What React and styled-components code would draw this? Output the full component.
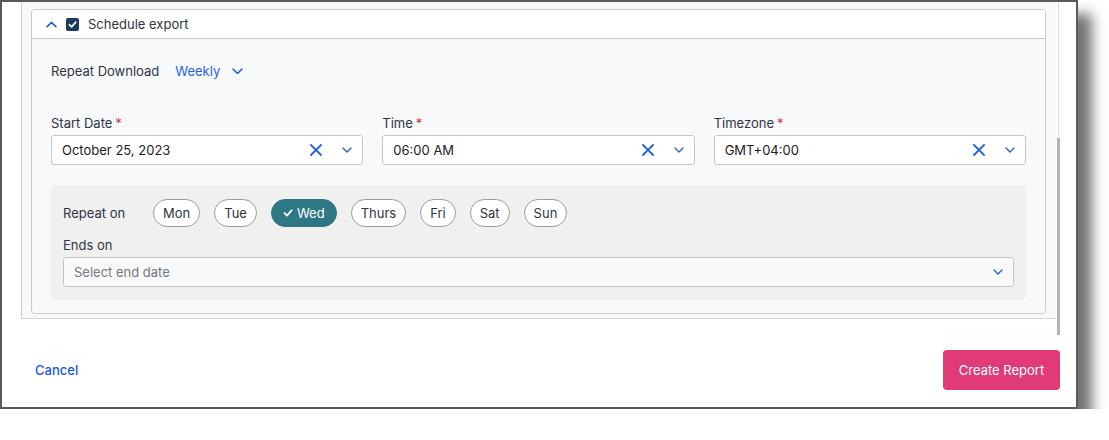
import React from 'react';
import styled, { createGlobalStyle } from 'styled-components';

const Global = createGlobalStyle`
  html, body {
    margin: 0;
    padding: 0;
    background: #fff;
    font-family: Inter, "Open Sans", sans-serif;
  }
  * { box-sizing: border-box; }
`;

const BLUE = '#2563d8';

const S = {
  Dialog: styled.div`
    position: relative;
    width: 1078px;
    height: 409px;
    border: 2px solid #5a5a5a;
    background: #fff;
    box-shadow: 14px 14px 12px rgba(0, 0, 0, 0.55);
    display: flex;
    flex-direction: column;
  `,
  Scroll: styled.div`
    margin-left: 19px;
    margin-right: 20px;
    height: 317px;
    border-left: 1px solid #cfd1d4;
    border-bottom: 1px solid #cfd1d4;
    background: #f7f8fa;
    padding: 7px 10px 5px 9px;
  `,
  Track: styled.div`
    position: absolute;
    top: 0;
    right: 17px;
    width: 1px;
    height: 136px;
    background: #dcdcdc;
  `,
  Thumb: styled.div`
    position: absolute;
    top: 136px;
    right: 16px;
    width: 3px;
    height: 197px;
    background: #b3b3b3;
  `,
  Card: styled.section`
    border: 1px solid #c9cbce;
    border-radius: 4px;
    background: #f8f9fb;
    overflow: hidden;
  `,
  Header: styled.div`
    height: 29px;
    background: #fff;
    border-bottom: 1px solid #c9cbce;
    display: flex;
    align-items: center;
    padding-left: 14px;
    gap: 9px;
    font-size: 13px;
    color: #2f3540;
  `,
  Check: styled.span`
    width: 13px;
    height: 13px;
    border-radius: 2px;
    background: #1d3a5e;
    display: inline-flex;
    align-items: center;
    justify-content: center;
  `,
  Body: styled.div`
    padding: 17px 19px 13px 19px;
  `,
  RepeatRow: styled.div`
    height: 30px;
    display: flex;
    align-items: center;
    gap: 16px;
    font-size: 13px;
    color: #2f3540;
  `,
  Link: styled.span`
    color: ${BLUE};
    display: inline-flex;
    align-items: center;
    gap: 12px;
  `,
  Fields: styled.div`
    margin-top: 28px;
    display: grid;
    grid-template-columns: repeat(3, 1fr);
    gap: 19px;
  `,
  Field: styled.div`
    display: flex;
    flex-direction: column;
  `,
  Label: styled.label`
    font-size: 13px;
    line-height: 18px;
    color: #2f3540;
    margin-bottom: 3px;
    & b {
      color: #e0312f;
      font-weight: 400;
      margin-left: 3px;
    }
  `,
  Input: styled.div`
    height: 30px;
    border: 1px solid #c4c6c9;
    border-radius: 3px;
    background: ${p => p.$bg || '#fff'};
    display: flex;
    align-items: center;
    padding: 0 10px;
    font-size: 13px;
    color: ${p => (p.$placeholder ? '#757a82' : '#222')};
  `,
  Value: styled.span`
    flex: 1;
  `,
  Icons: styled.span`
    display: inline-flex;
    align-items: center;
    gap: 20px;
  `,
  Panel: styled.div`
    margin-top: 20px;
    background: #f0f0f0;
    border-radius: 4px;
    padding: 14px 12px 13px;
  `,
  DaysRow: styled.div`
    display: flex;
    align-items: center;
    font-size: 13px;
    color: #2f3540;
  `,
  DaysLabel: styled.span`
    width: 90px;
  `,
  Days: styled.div`
    display: flex;
    gap: 14px;
  `,
  Day: styled.button`
    height: 28px;
    padding: 0 ${p => (p.$on ? 11 : 9)}px;
    border-radius: 14px;
    border: 1px solid ${p => (p.$on ? '#2e7886' : '#9a9ca0')};
    background: ${p => (p.$on ? '#2e7886' : '#fff')};
    color: ${p => (p.$on ? '#fff' : '#2f3540')};
    font-family: inherit;
    font-size: 13px;
    display: inline-flex;
    align-items: center;
    gap: 4px;
  `,
  EndsLabel: styled.div`
    margin-top: 9px;
    margin-bottom: 3px;
    font-size: 13px;
    line-height: 18px;
    color: #2f3540;
  `,
  Footer: styled.div`
    flex: 1;
    display: flex;
    align-items: center;
    justify-content: space-between;
    padding: 14px 16px 0 33px;
  `,
  Cancel: styled.button`
    border: none;
    background: none;
    padding: 0;
    font-family: inherit;
    font-size: 13px;
    font-weight: 500;
    color: #1a56db;
  `,
  Primary: styled.button`
    width: 117px;
    height: 40px;
    border: none;
    border-radius: 4px;
    background: #e03a78;
    color: #fff;
    font-family: inherit;
    font-size: 13px;
  `,
};

const ChevronDown = ({ w = 11 }) => (
  <svg width={w} height={w * 0.6} viewBox="0 0 10 6" fill="none">
    <polyline points="1,1 5,5 9,1" stroke={BLUE} strokeWidth="1.4" strokeLinecap="round" strokeLinejoin="round" />
  </svg>
);

const ChevronUp = () => (
  <svg width="11" height="7" viewBox="0 0 10 6" fill="none">
    <polyline points="1,5 5,1 9,5" stroke={BLUE} strokeWidth="1.5" strokeLinecap="round" strokeLinejoin="round" />
  </svg>
);

const Clear = () => (
  <svg width="12" height="12" viewBox="0 0 12 12" fill="none">
    <path d="M1 1L11 11M11 1L1 11" stroke={BLUE} strokeWidth="1.8" strokeLinecap="round" />
  </svg>
);

const Tick = ({ color = '#fff', size = 9 }) => (
  <svg width={size} height={size} viewBox="0 0 10 10" fill="none">
    <polyline points="1.5,5.2 4,7.6 8.6,2.4" stroke={color} strokeWidth="1.8" strokeLinecap="round" strokeLinejoin="round" />
  </svg>
);

const fields = [
  { label: 'Start Date', value: 'October 25, 2023' },
  { label: 'Time', value: '06:00 AM' },
  { label: 'Timezone', value: 'GMT+04:00' },
];

const days = ['Mon', 'Tue', 'Wed', 'Thurs', 'Fri', 'Sat', 'Sun'];

const App = () => {
  return (
    <>
      <Global />
      <S.Dialog>
        <S.Scroll>
          <S.Card>
            <S.Header>
              <ChevronUp />
              <S.Check>
                <Tick />
              </S.Check>
              <span>Schedule export</span>
            </S.Header>
            <S.Body>
              <S.RepeatRow>
                <span>Repeat Download</span>
                <S.Link>
                  Weekly
                  <ChevronDown />
                </S.Link>
              </S.RepeatRow>
              <S.Fields>
                {fields.map(f => (
                  <S.Field key={f.label}>
                    <S.Label>
                      {f.label}
                      <b>*</b>
                    </S.Label>
                    <S.Input>
                      <S.Value>{f.value}</S.Value>
                      <S.Icons>
                        <Clear />
                        <ChevronDown w={10} />
                      </S.Icons>
                    </S.Input>
                  </S.Field>
                ))}
              </S.Fields>
              <S.Panel>
                <S.DaysRow>
                  <S.DaysLabel>Repeat on</S.DaysLabel>
                  <S.Days>
                    {days.map(d => (
                      <S.Day key={d} $on={d === 'Wed'}>
                        {d === 'Wed' && <Tick size={10} />}
                        {d}
                      </S.Day>
                    ))}
                  </S.Days>
                </S.DaysRow>
                <S.EndsLabel>Ends on</S.EndsLabel>
                <S.Input $bg="#f8f9fb" $placeholder>
                  <S.Value>Select end date</S.Value>
                  <ChevronDown w={10} />
                </S.Input>
              </S.Panel>
            </S.Body>
          </S.Card>
        </S.Scroll>
        <S.Track />
        <S.Thumb />
        <S.Footer>
          <S.Cancel>Cancel</S.Cancel>
          <S.Primary>Create Report</S.Primary>
        </S.Footer>
      </S.Dialog>
    </>
  );
};

export default App;
